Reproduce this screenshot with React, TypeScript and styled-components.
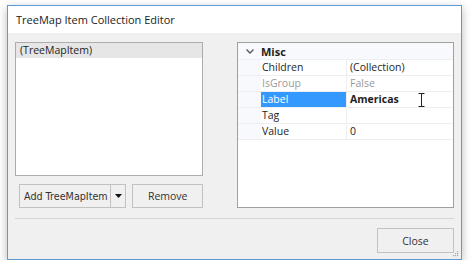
import styled, { createGlobalStyle } from "styled-components";

const GlobalStyle = createGlobalStyle`
  html, body {
    margin: 0;
    padding: 0;
    background: #ffffff;
  }
  body {
    font-family: "Open Sans", "Noto Sans", sans-serif;
    font-size: 12px;
    color: #1e1e1e;
  }
`;

const rows = [
  { name: "Children", value: "(Collection)" },
  { name: "IsGroup", value: "False", muted: true },
  { name: "Label", value: "Americas", selected: true },
  { name: "Tag", value: "" },
  { name: "Value", value: "0" },
];

const App = () => {
  return (
    <>
      <GlobalStyle />
      <Page>
        <Window>
          <TitleBar>TreeMap Item Collection Editor</TitleBar>
          <Body>
            <Panes>
              <ListColumn>
                <ListBox>
                  <ListItem $active>(TreeMapItem)</ListItem>
                </ListBox>
                <ButtonRow>
                  <SplitButton>
                    <SplitMain>Add TreeMapItem</SplitMain>
                    <SplitArrow>
                      <svg width="7" height="4" viewBox="0 0 7 4">
                        <path d="M0 0h7L3.5 4z" fill="#111" />
                      </svg>
                    </SplitArrow>
                  </SplitButton>
                  <Button $width={71}>Remove</Button>
                </ButtonRow>
              </ListColumn>
              <PropertyGrid>
                <GroupRow>
                  <Gutter>
                    <svg width="8" height="5" viewBox="0 0 8 5">
                      <path
                        d="M0.5 0.5L4 4L7.5 0.5"
                        fill="none"
                        stroke="#555"
                        strokeWidth="1.3"
                      />
                    </svg>
                  </Gutter>
                  <GroupName>Misc</GroupName>
                </GroupRow>
                {rows.map((r) => (
                  <PropRow key={r.name}>
                    <Gutter />
                    <PropName $selected={r.selected} $muted={r.muted}>
                      {r.name}
                    </PropName>
                    <PropValue $bold={r.selected} $muted={r.muted}>
                      {r.value}
                      {r.selected && (
                        <Caret>
                          <svg width="7" height="14" viewBox="0 0 7 14">
                            <path
                              d="M0.5 0.5h6M3.5 0.5v13M0.5 13.5h6"
                              fill="none"
                              stroke="#222"
                              strokeWidth="1"
                            />
                          </svg>
                        </Caret>
                      )}
                    </PropValue>
                  </PropRow>
                ))}
              </PropertyGrid>
            </Panes>
            <Separator />
            <Footer>
              <Button $width={77} $height={25}>
                Close
              </Button>
            </Footer>
            <Grip>
              <svg width="6" height="6" viewBox="0 0 6 6">
                <rect x="4" y="0" width="1.2" height="1.2" fill="#a8a8a8" />
                <rect x="2" y="2" width="1.2" height="1.2" fill="#a8a8a8" />
                <rect x="4" y="2" width="1.2" height="1.2" fill="#a8a8a8" />
                <rect x="0" y="4" width="1.2" height="1.2" fill="#a8a8a8" />
                <rect x="2" y="4" width="1.2" height="1.2" fill="#a8a8a8" />
                <rect x="4" y="4" width="1.2" height="1.2" fill="#a8a8a8" />
              </svg>
            </Grip>
          </Body>
        </Window>
      </Page>
    </>
  );
};

const Page = styled.div`
  padding: 5px 0 0 7px;
`;

const Window = styled.div`
  width: 453px;
  height: 253px;
  border: 1px solid #5c9ad8;
  background: #f0f0f0;
  box-shadow: 0 3px 9px rgba(0, 0, 0, 0.28);
  display: flex;
  flex-direction: column;
`;

const TitleBar = styled.div`
  height: 27px;
  background: #ffffff;
  padding-left: 8px;
  display: flex;
  align-items: center;
  font-size: 11px;
  color: #222;
`;

const Body = styled.div`
  position: relative;
  flex: 1;
  padding: 9px 7px 6px 7px;
  display: flex;
  flex-direction: column;
`;

const Panes = styled.div`
  display: flex;
  gap: 34px;
`;

const ListColumn = styled.div`
  width: 188px;
  display: flex;
  flex-direction: column;
`;

const ListBox = styled.div`
  height: 132px;
  border: 1px solid #adadad;
  background: #ffffff;
`;

const ListItem = styled.div<{ $active?: boolean }>`
  height: 15px;
  line-height: 15px;
  padding-left: 4px;
  font-size: 10.5px;
  background: ${(p) => (p.$active ? "#e6e6e6" : "transparent")};
`;

const ButtonRow = styled.div`
  display: flex;
  gap: 6px;
  margin-top: 8px;
  padding-left: 4px;
`;

const Button = styled.div<{ $width: number; $height?: number }>`
  box-sizing: border-box;
  width: ${(p) => p.$width}px;
  height: ${(p) => p.$height ?? 24}px;
  border: 1px solid #c2c2c2;
  background: #f0f0f0;
  display: flex;
  align-items: center;
  justify-content: center;
  font-size: 10.5px;
  color: #333;
`;

const SplitButton = styled.div`
  box-sizing: border-box;
  width: 108px;
  height: 24px;
  border: 1px solid #c2c2c2;
  background: #f0f0f0;
  display: flex;
`;

const SplitMain = styled.div`
  flex: 1;
  display: flex;
  align-items: center;
  padding-left: 4px;
  white-space: nowrap;
  overflow: hidden;
  font-family: "DejaVu Sans", sans-serif;
  font-size: 9.6px;
  color: #333;
  border-right: 1px solid #c2c2c2;
`;

const SplitArrow = styled.div`
  width: 14px;
  display: flex;
  align-items: center;
  justify-content: center;
`;

const PropertyGrid = styled.div`
  box-sizing: border-box;
  width: 217px;
  height: 166px;
  border: 1px solid #a0a0a0;
  background: #ffffff;
  display: flex;
  flex-direction: column;
`;

const GroupRow = styled.div`
  display: flex;
  height: 16px;
  align-items: center;
  background: #f7f9fc;
  border-bottom: 1px solid #edf0f3;
`;

const Gutter = styled.div`
  width: 23px;
  flex-shrink: 0;
  display: flex;
  align-items: center;
  justify-content: center;
  align-self: stretch;
  background: #f7f9fc;
`;

const GroupName = styled.div`
  font-weight: 700;
  font-size: 11px;
`;

const PropRow = styled.div`
  display: flex;
  height: 15px;
  border-bottom: 1px solid #eeeeee;
`;

const PropName = styled.div<{ $selected?: boolean; $muted?: boolean }>`
  width: 84px;
  padding-left: 1px;
  line-height: 15px;
  font-size: 10.5px;
  background: ${(p) => (p.$selected ? "#3399ff" : "transparent")};
  color: ${(p) => (p.$selected ? "#ffffff" : p.$muted ? "#9a9a9a" : "#1e1e1e")};
  border-right: 1px solid #eeeeee;
`;

const PropValue = styled.div<{ $bold?: boolean; $muted?: boolean }>`
  position: relative;
  flex: 1;
  padding-left: 3px;
  line-height: 15px;
  font-size: 10.5px;
  font-weight: ${(p) => (p.$bold ? 700 : 400)};
  color: ${(p) => (p.$muted ? "#9a9a9a" : "#1e1e1e")};
`;

const Caret = styled.span`
  position: absolute;
  left: 71px;
  top: 1px;
  display: flex;
`;

const Separator = styled.div`
  margin-top: 10px;
  border-top: 1px solid #d5d5d5;
`;

const Footer = styled.div`
  display: flex;
  justify-content: flex-end;
  margin-top: 9px;
`;

const Grip = styled.div`
  position: absolute;
  right: 2px;
  bottom: 2px;
  display: flex;
`;

export default App;
